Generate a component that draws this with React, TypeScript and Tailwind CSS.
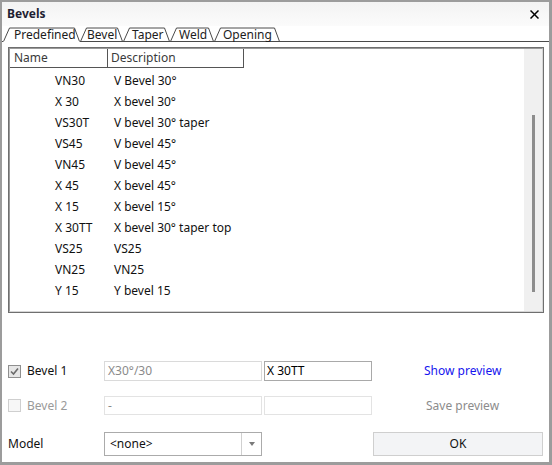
import React from "react";

const rows: [string, string][] = [
  ["VN30", "V Bevel 30°"],
  ["X 30", "X bevel 30°"],
  ["VS30T", "V bevel 30° taper"],
  ["VS45", "V bevel 45°"],
  ["VN45", "V bevel 45°"],
  ["X 45", "X bevel 45°"],
  ["X 15", "X bevel 15°"],
  ["X 30TT", "X bevel 30° taper top"],
  ["VS25", "VS25"],
  ["VN25", "VN25"],
  ["Y 15", "Y bevel 15"],
];

type Tab = { label: string; w: number; cls: string; pad: string; active?: boolean };
const tabs: Tab[] = [
  { label: "Predefined", w: 77, cls: "w-[77px]", pad: "pl-[11px]", active: true },
  { label: "Bevel", w: 43, cls: "w-[43px]", pad: "pl-[7px]" },
  { label: "Taper", w: 47, cls: "w-[47px]", pad: "pl-[9px]" },
  { label: "Weld", w: 44, cls: "w-[44px]", pad: "pl-[9px]" },
  { label: "Opening", w: 66, cls: "w-[66px]", pad: "pl-[9px]" },
];

function TabItem({ t }: { t: Tab }) {
  const w = t.w;
  return (
    <div className={`relative h-[16px] ${t.cls} shrink-0`}>
      <svg className="absolute inset-0" width={w} height={16} viewBox={`0 0 ${w} 16`}>
        <polyline
          points={`0.5,15.5 6.5,2 ${w - 5.5},2 ${w - 0.5},15.5`}
          fill={t.active ? "#ffffff" : "none"}
          stroke="#4a4a4a"
          strokeWidth={1}
        />
        {!t.active && <line x1={0} y1={15.5} x2={w} y2={15.5} stroke="#4a4a4a" strokeWidth={1} />}
      </svg>
      <div className={`relative ${t.pad} pt-[1px] text-[12px] leading-[15px] text-[#1c1c1c] whitespace-nowrap`}>
        {t.label}
      </div>
    </div>
  );
}

function CheckBox({ checked, disabled }: { checked?: boolean; disabled?: boolean }) {
  return (
    <div
      className={`w-[13px] h-[13px] border flex items-center justify-center ${
        disabled ? "border-[#cfcfcf] bg-[#f7f7f7]" : "border-[#8f8f8f] bg-[#e6e6e6]"
      }`}
    >
      {checked && (
        <svg width="9" height="9" viewBox="0 0 9 9">
          <polyline points="1,4.5 3.5,7 8,1.5" fill="none" stroke="#6b6b6b" strokeWidth="1.6" />
        </svg>
      )}
    </div>
  );
}

export default function App() {
  return (
    <div
      className="w-[552px] h-[465px] border-t-2 border-l-2 border-r-[3px] border-b-[3px] border-[#9c9c9c] bg-white flex flex-col overflow-hidden"
      style={{ fontFamily: '"Noto Sans", "Open Sans", sans-serif' }}
    >
      {/* title bar */}
      <div className="h-[24px] shrink-0 flex items-center justify-between pl-[5px] pr-[10px] bg-gradient-to-b from-[#f3f3f3] to-[#fbfbfb]">
        <span className="text-[12px] font-bold text-[#1f1f33] leading-none">Bevels</span>
        <svg width="9" height="9" viewBox="0 0 9 9">
          <line x1="0.5" y1="0.5" x2="8.5" y2="8.5" stroke="#000" strokeWidth="1.5" />
          <line x1="8.5" y1="0.5" x2="0.5" y2="8.5" stroke="#000" strokeWidth="1.5" />
        </svg>
      </div>

      {/* tabs */}
      <div className="h-[16px] shrink-0 flex items-end">
        <div className="w-[1px] h-[16px] border-b border-[#4a4a4a]" />
        {tabs.map((t) => (
          <TabItem key={t.label} t={t} />
        ))}
        <div className="flex-1 h-[16px] border-b border-[#4a4a4a]" />
      </div>

      {/* list */}
      <div className="mt-[5px] ml-[6px] w-[536px] h-[266px] shrink-0 border border-[#6f6f6f]">
        <div className="h-full border border-t-[#9a9a9a] border-l-[#9a9a9a] border-r-[#d6d6d6] border-b-[#d6d6d6] flex">
          <div className="flex-1 flex flex-col">
            <div className="flex h-[19px] text-[12px] text-[#3a3a3a]">
              <div className="w-[98px] border-r border-b border-[#555] pl-[4px] leading-[18px]">Name</div>
              <div className="w-[136px] border-r border-b border-[#555] pl-[3px] leading-[18px]">Description</div>
            </div>
            <div className="pt-[2px] flex flex-col">
              {rows.map(([n, d]) => (
                <div key={n} className="h-[21px] flex items-center text-[12px] text-[#111] leading-none">
                  <span className="pl-[45px] w-[104px] shrink-0">{n}</span>
                  <span>{d}</span>
                </div>
              ))}
            </div>
          </div>
          <div className="w-[18px] bg-[#f0f0f0] flex flex-col items-center">
            <div className="mt-[66px] h-[177px] w-[3px] bg-[#8d8d8d]" />
          </div>
        </div>
      </div>

      {/* bottom rows */}
      <div className="mt-[48px] pl-[6px] flex items-center h-[20px] shrink-0">
        <div className="w-[96px] flex items-center gap-[6px]">
          <CheckBox checked />
          <span className="text-[12px] text-[#111] leading-none">Bevel 1</span>
        </div>
        <div className="w-[158px] h-[20px] border border-[#dadada] pl-[3px] text-[12px] text-[#8a8a8a] leading-[18px]">X30°/30</div>
        <div className="ml-[2px] w-[108px] h-[20px] border border-[#a9a9a9] pl-[2px] text-[12px] text-[#000] leading-[18px]">X 30TT</div>
        <div className="pl-[52px] text-[12px] text-[#1515ee] leading-none">Show preview</div>
      </div>

      <div className="mt-[15px] pl-[6px] flex items-center h-[19px] shrink-0">
        <div className="w-[96px] flex items-center gap-[6px]">
          <CheckBox disabled />
          <span className="text-[12px] text-[#9a9a9a] leading-none">Bevel 2</span>
        </div>
        <div className="w-[158px] h-[19px] border border-[#e3e3e3] pl-[3px] text-[12px] text-[#8a8a8a] leading-[17px]">-</div>
        <div className="ml-[2px] w-[108px] h-[19px] border border-[#e3e3e3]" />
        <div className="pl-[54px] text-[12px] text-[#8c8c8c] leading-none">Save preview</div>
      </div>

      <div className="mt-[17px] pl-[6px] flex items-center h-[24px] shrink-0">
        <div className="w-[96px] text-[12px] text-[#111] leading-none">Model</div>
        <div className="w-[158px] h-[24px] border border-[#ababab] flex">
          <div className="flex-1 pl-[5px] text-[12px] text-[#111] leading-[22px]">&lt;none&gt;</div>
          <div className="w-[20px] border-l border-[#d0d0d0] flex items-center justify-center">
            <svg width="6" height="4" viewBox="0 0 6 4">
              <polygon points="0,0 6,0 3,4" fill="#7a7a7a" />
            </svg>
          </div>
        </div>
        <div className="ml-[111px] w-[170px] h-[24px] border border-[#cfcfcf] bg-[#f3f4f6] flex items-center justify-center text-[12px] text-[#111] leading-none">
          OK
        </div>
      </div>
    </div>
  );
}
